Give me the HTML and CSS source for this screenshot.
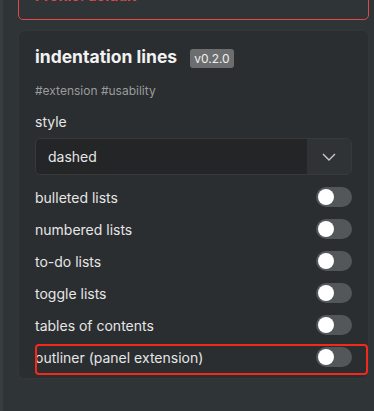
FILE: index.html
```html
<!DOCTYPE html>
<html lang="en">
    <head>
        <meta charset="utf-8"/>
        <title>indentation lines</title>
        <link rel="stylesheet" href="styles.css">
    </head>
    <body>
        <div class="edge"></div>
        <div class="main">
            <!-- Profile box, scrolled partly out of view -->
            <div class="profile">Profile: default</div>

            <!-- Extension card -->
            <div class="card">
                <div class="title">
                    <h1>indentation lines</h1>
                    <span class="badge">v0.2.0</span>
                </div>
                <p class="tags">#extension #usability</p>
                <p class="label">style</p>
                <div class="select">
                    <span class="value">dashed</span>
                    <span class="arrow">
                        <svg width="14" height="8" viewBox="0 0 14 8"><path d="M1 1 L7 7 L13 1" fill="none" stroke="#c9c9c9" stroke-width="1.4"/></svg>
                    </span>
                </div>
                <div class="options">
                    <div class="row"><span>bulleted lists</span><span class="toggle"></span></div>
                    <div class="row"><span>numbered lists</span><span class="toggle"></span></div>
                    <div class="row"><span>to-do lists</span><span class="toggle"></span></div>
                    <div class="row"><span>toggle lists</span><span class="toggle"></span></div>
                    <div class="row"><span>tables of contents</span><span class="toggle"></span></div>
                    <div class="row"><span>outliner (panel extension)</span><span class="toggle"></span>
                        <div class="highlight"></div>
                    </div>
                </div>
            </div>
        </div>
    </body>
</html>
```

FILE: styles.css
```css
body {
    background-color: #2f3437;
    margin: 0;
    height: 411px;
    overflow: hidden;
    display: flex;
    font-family: Inter, "Liberation Sans", sans-serif;
    color: #e6e6e5;
}

.edge {
    width: 3px;
    background-color: #393d40;
}

.main {
    flex: 1;
    padding: 0 5px 0 15px;
}

.profile {
    margin-top: -24px;
    height: 44px;
    box-sizing: border-box;
    border: 1px solid #e0484a;
    border-radius: 5px;
    padding: 11px 16px 0;
    color: #e5484b;
    font-size: 14px;
    font-weight: 700;
    line-height: 16px;
}

.card {
    margin-top: 10px;
    background-color: #2a2e31;
    border: 1px solid #33373a;
    border-radius: 7px;
    padding: 12px 16px 5px;
}

.title {
    display: flex;
    align-items: center;
    gap: 13px;
    height: 26px;
}

h1 {
    margin: 0;
    font-size: 17.5px;
    font-weight: 700;
    color: #f2f2f2;
}

.badge {
    margin-top: 4px;
    background-color: #6b6d6e;
    color: #f0f0f0;
    font-size: 12px;
    line-height: 19px;
    padding: 0 4px;
    border-radius: 3px;
}

.tags {
    margin: 14px 0 0;
    font-size: 12px;
    line-height: 16px;
    color: #9a9b9c;
}

.label {
    margin: 14px 0 0;
    font-size: 14px;
    line-height: 18px;
}

.select {
    margin-top: 7px;
    height: 37px;
    box-sizing: border-box;
    display: flex;
    border: 1px solid #373a3d;
    border-radius: 5px;
    background-color: #232527;
    overflow: hidden;
    font-size: 14px;
}

.select .value {
    flex: 1;
    padding-left: 12px;
    line-height: 35px;
}

.select .arrow {
    width: 44px;
    display: flex;
    align-items: center;
    justify-content: center;
    background-color: #2f3336;
}

.options {
    margin-top: 6px;
}

.row {
    position: relative;
    height: 32px;
    display: flex;
    align-items: center;
    justify-content: space-between;
    font-size: 14px;
}

.toggle {
    position: relative;
    width: 36px;
    height: 20px;
    border-radius: 10px;
    background-color: #54575a;
}

.toggle::after {
    content: "";
    position: absolute;
    left: 2px;
    top: 2px;
    width: 16px;
    height: 16px;
    border-radius: 50%;
    background-color: #ffffff;
}

/* annotation box drawn over the last row */
.highlight {
    position: absolute;
    left: 0;
    right: -16px;
    top: 3px;
    bottom: -2px;
    border: 2px solid #f4291b;
    border-radius: 4px;
}
```
